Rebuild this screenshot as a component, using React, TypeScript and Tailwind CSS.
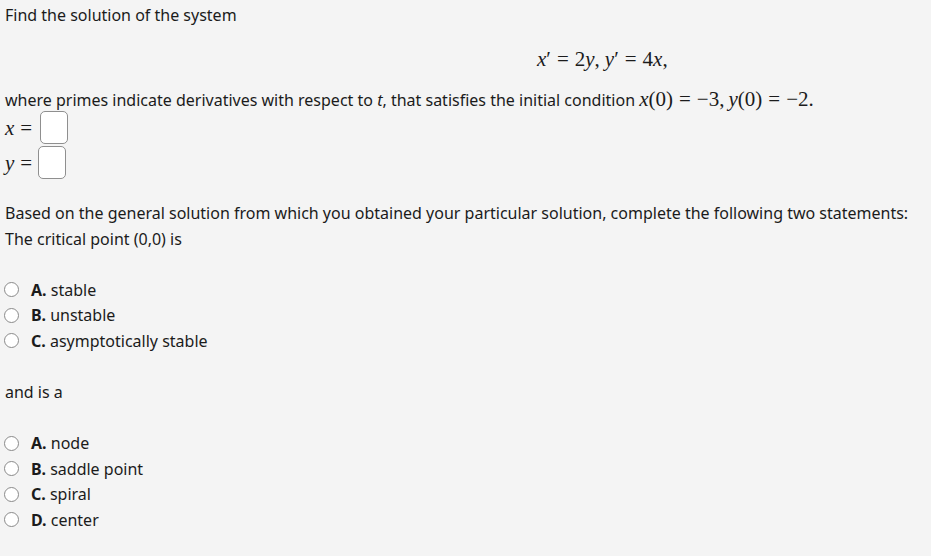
import React from "react";

const Eq = () => <span className="inline-block mx-[6px] not-italic">=</span>;

function Radio({ letter, text }: { letter: string; text: string }) {
  return (
    <div className="flex items-center h-[25.5px]">
      <span className="w-[15px] h-[15px] rounded-full border border-[#8a8a8a] bg-white -ml-[1px] mr-[12px]" />
      <span>
        <b className="font-bold">{letter}.</b> {text}
      </span>
    </div>
  );
}

export default function App() {
  return (
    <div className="w-[931px] h-[556px] bg-[#f4f4f4] text-[#1b1b1b] text-[16px] leading-[20px] px-[5px] overflow-hidden" style={{ fontFamily: '"Noto Sans", sans-serif' }}>
      <div className="pt-[5px]">Find the solution of the system</div>
      <div className="mt-[22px] ml-[532px] text-[21px] leading-[24px] font-['Liberation_Serif',serif]">
        <span className="italic">x</span>′<Eq />2<span className="italic">y</span>,<span className="ml-[5px] italic">y</span>′<Eq />4<span className="italic">x</span>,
      </div>
      <div className="mt-[18px]">
        where primes indicate derivatives with respect to <i>t</i>, that satisfies the initial condition{" "}
        <span className="text-[21px] font-['Liberation_Serif',serif]">
          <span className="italic">x</span>(0)<Eq />−3,<span className="ml-[4px] italic">y</span>(0)<Eq />−2.
        </span>
      </div>
      <div className="flex items-center mt-[1px] h-[33px]">
        <span className="w-[35px] shrink-0 whitespace-nowrap text-[21px] font-['Liberation_Serif',serif]"><span className="italic">x</span><Eq /></span>
        <span className="w-[28px] h-[33px] shrink-0 rounded-[5px] border border-[#8f8f8f] bg-white" />
      </div>
      <div className="flex items-center mt-[2px] h-[33px]">
        <span className="w-[33px] shrink-0 whitespace-nowrap text-[21px] font-['Liberation_Serif',serif]"><span className="italic">y</span><Eq /></span>
        <span className="w-[28px] h-[33px] shrink-0 rounded-[5px] border border-[#8f8f8f] bg-white" />
      </div>
      <div className="mt-[21px] leading-[26px]">
        <div>Based on the general solution from which you obtained your particular solution, complete the following two statements:</div>
        <div>The critical point (0,0) is</div>
      </div>
      <div className="mt-[25px]">
        <Radio letter="A" text="stable" />
        <Radio letter="B" text="unstable" />
        <Radio letter="C" text="asymptotically stable" />
      </div>
      <div className="mt-[28px]">and is a</div>
      <div className="mt-[29px]">
        <Radio letter="A" text="node" />
        <Radio letter="B" text="saddle point" />
        <Radio letter="C" text="spiral" />
        <Radio letter="D" text="center" />
      </div>
    </div>
  );
}
